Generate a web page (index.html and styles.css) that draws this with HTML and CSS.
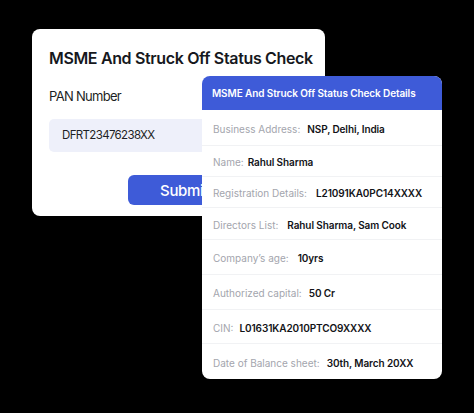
FILE: index.html
```html
<!DOCTYPE html>
<html>
<head>
<meta charset="utf-8">
<link rel="stylesheet" href="styles.css">
</head>
<body>
<div class="stage">
  <div class="form-card">
    <h1 class="form-title">MSME And Struck Off Status Check</h1>
    <div class="field-label">PAN Number</div>
    <div class="input">DFRT23476238XX</div>
    <div class="actions"><button class="submit">Submit</button></div>
  </div>
  <div class="details-card">
    <div class="details-head">MSME And Struck Off Status Check Details</div>
    <div class="row r1"><span class="k">Business Address:</span><span class="v">NSP, Delhi, India</span></div>
    <div class="row r2"><span class="k tight">Name:</span><span class="v">Rahul Sharma</span></div>
    <div class="row r3"><span class="k">Registration Details:</span><span class="v">L21091KA0PC14XXXX</span></div>
    <div class="row r4"><span class="k">Directors List:</span><span class="v">Rahul Sharma, Sam Cook</span></div>
    <div class="row r5"><span class="k wide">Company’s age:</span><span class="v">10yrs</span></div>
    <div class="row r6"><span class="k">Authorized capital:</span><span class="v">50 Cr</span></div>
    <div class="row r7"><span class="k mid">CIN:</span><span class="v">L01631KA2010PTCO9XXXX</span></div>
    <div class="row r8 last"><span class="k">Date of Balance sheet:</span><span class="v">30th, March 20XX</span></div>
  </div>
</div>
</body>
</html>
```
FILE: styles.css
```css
html, body {
  margin: 0;
  padding: 0;
  background: #000;
}
body {
  width: 474px;
  height: 413px;
  overflow: hidden;
  font-family: Inter, "Noto Sans", sans-serif;
}
.stage {
  position: relative;
  width: 474px;
  height: 413px;
  padding: 29px 0 0 32px;
  box-sizing: border-box;
}
.form-card {
  width: 293px;
  height: 187px;
  background: #fff;
  border-radius: 8px;
  padding: 18px 0 0 17px;
  box-sizing: border-box;
  overflow: hidden;
}
.form-title {
  margin: 0;
  font-size: 16px;
  font-weight: 600;
  color: #16181d;
  line-height: 22px;
  letter-spacing: -0.35px;
  white-space: nowrap;
}
.field-label {
  margin-top: 18px;
  font-size: 13px;
  letter-spacing: -0.7px;
  color: #1d1f24;
  line-height: 18px;
}
.input {
  margin-top: 14px;
  width: 230px;
  height: 33px;
  background: #eef0fa;
  border-radius: 5px;
  padding-left: 13px;
  box-sizing: border-box;
  font-size: 11.5px;
  letter-spacing: -0.65px;
  line-height: 33px;
  color: #1d1f24;
}
.actions {
  margin-top: 23px;
  padding-left: 79px;
}
.submit {
  width: 150px;
  height: 30px;
  border: 0;
  border-radius: 6px;
  background: #3e5bd8;
  color: #fff;
  font-family: Inter, sans-serif;
  font-size: 15px;
  font-weight: 500;
  letter-spacing: -0.3px;
  text-align: left;
  padding-left: 32px;
}
.details-card {
  position: absolute;
  left: 202px;
  top: 76px;
  width: 240px;
  height: 303px;
  background: #fff;
  border-radius: 8px;
  overflow: hidden;
}
.details-head {
  height: 34px;
  background: #3e5bd8;
  color: #fff;
  font-size: 10px;
  font-weight: 600;
  letter-spacing: -0.1px;
  line-height: 34px;
  padding-left: 10px;
  white-space: nowrap;
}
.row {
  display: flex;
  align-items: center;
  padding-left: 11px;
  padding-top: 2px;
  border-bottom: 1px solid #f1f2f4;
  font-size: 10px;
  white-space: nowrap;
  box-sizing: border-box;
}
.r1 { height: 36px; }
.r2 { height: 31px; }
.r3 { height: 31px; }
.r4 { height: 32px; }
.r5 { height: 35px; }
.r6 { height: 35px; }
.r7 { height: 34px; }
.r8 { height: 35px; }
.row.last { border-bottom: 0; }
.k {
  color: #a3a5ad;
  margin-right: 7px;
}
.k.tight { margin-right: 4px; }
.k.wide { margin-right: 9px; }
.k.mid { margin-right: 6px; }
.r3 .k, .r4 .k { margin-right: 9px; }
.v {
  color: #121317;
  font-weight: 600;
  letter-spacing: -0.1px;
}
```
